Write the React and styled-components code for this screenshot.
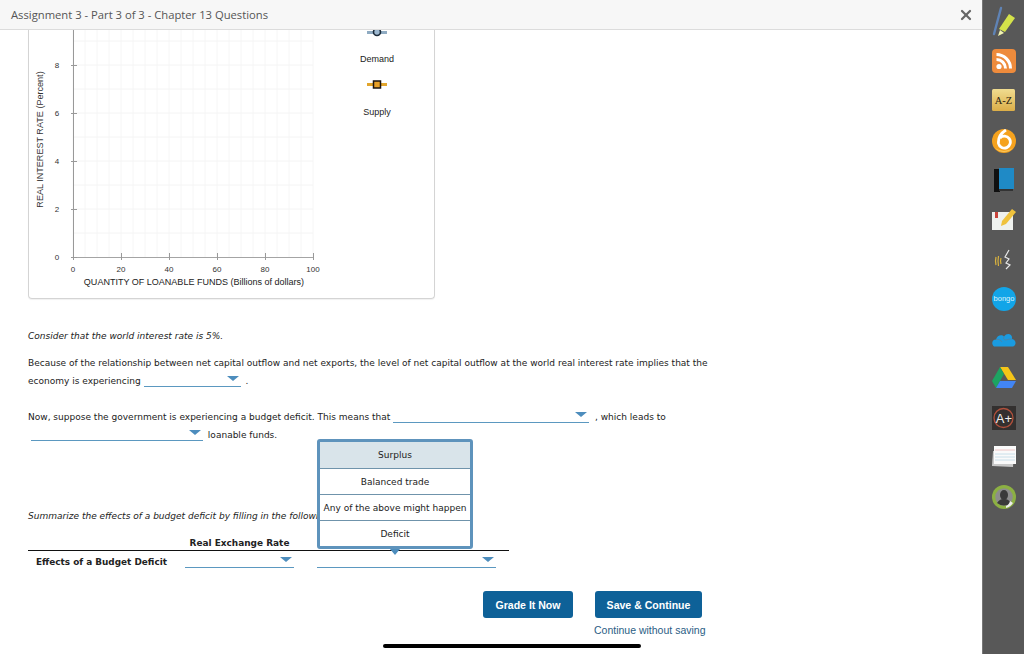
import React from "react";
import styled, { createGlobalStyle } from "styled-components";
import { X } from "lucide-react";

const GlobalStyle = createGlobalStyle`
	html, body {
		margin: 0;
		height: 100%;
		overflow: hidden;
		background: #fff;
	}
	#root {
		height: 100%;
	}
`

const Page = styled.div`
	display: flex;
	width: 1024px;
	height: 654px;
	position: relative;
	overflow: hidden;
`

const Main = styled.div`
	flex: 1;
	min-width: 0;
	display: flex;
	flex-direction: column;
`

const Header = styled.header`
	height: 30px;
	flex: none;
	box-sizing: border-box;
	display: flex;
	align-items: center;
	justify-content: space-between;
	padding: 0 8px 0 11px;
	background: #f7f7f7;
	border-bottom: 1px solid #dcdcdc;
`

const Title = styled.h1`
	margin: 0;
	font: 400 11.24px "Open Sans", sans-serif;
	color: #555;
`

const CloseButton = styled.button`
	display: flex;
	padding: 0;
	border: 0;
	background: none;
	color: #666;
`

const Content = styled.div`
	flex: 1;
	padding: 0 28px;
	font: 9.03px/18px "DejaVu Sans", Verdana, sans-serif;
	color: #222;
`

const ChartCard = styled.div`
	width: 407px;
	height: 269px;
	box-sizing: border-box;
	border: 1px solid #d4d4d4;
	border-top: 0;
	border-radius: 0 0 4px 4px;
	box-shadow: 0 1px 1px rgba(0, 0, 0, 0.06);

	svg {
		display: block;
	}
`

const Paragraph = styled.p`
	margin: ${props => props.$top}px 0 0;
	font-style: ${props => (props.$italic ? "italic" : "normal")};
	width: 690px;
`

const SelectBox = styled.span`
	display: inline-block;
	position: relative;
	vertical-align: -3px;
	box-sizing: border-box;
	width: ${props => props.$width}px;
	height: 15px;
	margin-left: ${props => props.$lead || 0}px;
	margin-right: ${props => props.$gap || 0}px;
	border-bottom: 1px solid #5b98c0;
`

const Caret = styled.span`
	position: absolute;
	right: 2px;
	top: 4px;
	border-style: solid;
	border-width: 5px 6px 0;
	border-color: #4d8dbd transparent transparent;
`

const Popup = styled.div`
	position: absolute;
	left: 0;
	bottom: 18px;
	z-index: 2;
	width: 156px;
	box-sizing: border-box;
	border: 3px solid #5e93bc;
	border-radius: 3px;
	background: #fff;

	&::after {
		content: "";
		position: absolute;
		left: 70px;
		bottom: -9px;
		border-style: solid;
		border-width: 6px 5px 0;
		border-color: #4d8dbd transparent transparent;
	}
`

const PopupOption = styled.div`
	height: 26px;
	display: flex;
	align-items: center;
	justify-content: center;
	white-space: nowrap;
	background: ${props => (props.$active ? "#d9e4ea" : "#fff")};
	border-top: ${props => (props.$first ? "0" : "1px solid #6f93ab")};
	box-sizing: border-box;
`

const Table = styled.div`
	display: grid;
	grid-template-columns: 134px 109px 179px;
	column-gap: 23px;
	width: 481px;
	margin-top: 9px;
`

const HeadCell = styled.div`
	height: 16px;
	line-height: 18px;
	font-size: 8.95px;
	font-weight: 700;
	text-align: center;
	border-bottom: 1px solid #111;
	margin-right: ${props => (props.$last ? "-13px" : "0")};
	margin-left: ${props => (props.$first ? "0" : "-23px")};
	padding-left: ${props => (props.$first ? "0" : "23px")};
`

const RowLabel = styled.div`
	padding: 2px 0 0 8px;
	font-size: 8.9px;
	font-weight: 700;
	white-space: nowrap;
`

const RowCell = styled.div`
	padding-top: 2px;
`

const Actions = styled.div`
	display: flex;
	align-items: flex-start;
	gap: 22px;
	margin: 20px 0 0 455px;
`

const ButtonColumn = styled.div`
	display: flex;
	flex-direction: column;
	align-items: flex-start;
`

const ActionButton = styled.button`
	width: ${props => props.$width}px;
	height: 27px;
	padding: 0;
	border: 0;
	border-radius: 3px;
	background: #0e6198;
	color: #fff;
	font: 700 10.55px "Liberation Sans", Arial, sans-serif;
`

const TextLink = styled.a`
	margin: 5px 0 0 -1px;
	font: 10.5px/14px "Liberation Sans", Arial, sans-serif;
	color: #2a5d84;
	white-space: nowrap;
`

const HomeBar = styled.div`
	position: absolute;
	left: 383px;
	bottom: 6px;
	width: 258px;
	height: 4px;
	border-radius: 2px;
	background: #000;
`

const Sidebar = styled.aside`
	width: 42px;
	flex: none;
	box-sizing: border-box;
	padding-top: 2px;
	display: flex;
	flex-direction: column;
	align-items: center;
	background: #585858;
	border-left: 1px solid #777;
`

const ToolSlot = styled.div`
	height: 39.6px;
	display: flex;
	align-items: center;
	justify-content: center;
	flex: none;
`

const axisFont = { fontFamily: '"Liberation Sans", Arial, sans-serif', fill: "#333" }

const Chart = () => {
	const xGrid = Array.from({ length: 21 }, (_, i) => 73 + i * 12)
	const yGrid = Array.from({ length: 9 }, (_, i) => 41 + i * 24)
	const xTicks = [[73, "0"], [121, "20"], [169, "40"], [217, "60"], [265, "80"], [313, "100"]]
	const yTicks = [[65, "8"], [113, "6"], [161, "4"], [209, "2"], [257, "0"]]
	return (
		<svg width="405" height="268" viewBox="29 30 405 268">
			{xGrid.map(x => <line key={x} x1={x} x2={x} y1="30" y2="257" stroke="#f6f6f6" />)}
			{yGrid.map(y => <line key={y} x1="73" x2="313" y1={y} y2={y} stroke="#f4f4f4" />)}
			<line x1="73.5" x2="73.5" y1="30" y2="257" stroke="#999" />
			<line x1="73" x2="313" y1="257.5" y2="257.5" stroke="#a4a4a4" />
			{xTicks.map(([x, label]) => (
				<g key={x}>
					<line x1={x + 0.5} x2={x + 0.5} y1="253" y2="260" stroke="#999" />
					<text x={x} y="272" textAnchor="middle" fontSize="8" style={axisFont}>{label}</text>
				</g>
			))}
			{yTicks.map(([y, label]) => (
				<g key={y}>
					<line x1="71" x2="77" y1={y + 0.5} y2={y + 0.5} stroke="#999" />
					<text x="57" y={y + 3} textAnchor="middle" fontSize="8" style={axisFont}>{label}</text>
				</g>
			))}
			<text x="194" y="285" textAnchor="middle" fontSize="9.03" style={{ ...axisFont, fill: "#222" }}>QUANTITY OF LOANABLE FUNDS (Billions of dollars)</text>
			<text transform="translate(43 139.5) rotate(-90)" textAnchor="middle" fontSize="9.07" style={axisFont}>REAL INTEREST RATE (Percent)</text>

			<rect x="367" y="31" width="20" height="3" fill="#8fabc2" />
			<circle cx="377" cy="32" r="3.5" fill="#9db8d0" stroke="#1c2b3a" strokeWidth="1.6" />
			<text x="377" y="62" textAnchor="middle" fontSize="9" style={{ ...axisFont, fill: "#222" }}>Demand</text>
			<rect x="367" y="83" width="20" height="3" fill="#e2a52c" />
			<rect x="373.5" y="81" width="7" height="7" fill="#e8a028" stroke="#1c1410" strokeWidth="1.5" />
			<text x="377" y="115" textAnchor="middle" fontSize="9" style={{ ...axisFont, fill: "#222" }}>Supply</text>
		</svg>
	)
}

const HighlighterIcon = () => (
	<svg width="24" height="32" viewBox="0 0 24 32">
		<path d="M9 2 L2 28" stroke="#5f83b5" strokeWidth="2.4" strokeLinecap="round" />
		<path d="M17 8 L23 12 L13 26 L7 23 Z" fill="#d4e24a" />
		<path d="M8 24 L12 27 L6 30 Z" fill="#f2f4b0" />
	</svg>
)

const RssIcon = () => (
	<svg width="24" height="24" viewBox="0 0 24 24">
		<rect width="24" height="24" rx="4" fill="#ee8b3c" />
		<circle cx="7" cy="17.5" r="2.6" fill="#fff" />
		<path d="M4.5 10.5 A9 9 0 0 1 13.5 19.5 M4.5 5.5 A14 14 0 0 1 18.5 19.5" fill="none" stroke="#fff" strokeWidth="3" />
	</svg>
)

const AzIcon = () => (
	<svg width="23" height="23" viewBox="0 0 23 23">
		<defs>
			<linearGradient id="azGold" x1="0" x2="0" y1="0" y2="1">
				<stop offset="0" stopColor="#f0dc90" />
				<stop offset="1" stopColor="#dcae48" />
			</linearGradient>
		</defs>
		<rect width="23" height="22" rx="1.5" fill="url(#azGold)" />
		<text x="11.5" y="15" textAnchor="middle" fontSize="10.5" fontFamily='"Liberation Serif", serif' fill="#2b2110">A-Z</text>
	</svg>
)

const SixIcon = () => (
	<svg width="24" height="24" viewBox="0 0 24 24">
		<circle cx="12" cy="12" r="12" fill="#f5a21e" />
		<path d="M3 19 A12 12 0 0 0 21 19 Q12 25 3 19 Z" fill="#fbc65a" />
		<path d="M14 1 C9 4 6 9 6.5 14.5 A6 6 0 1 0 8 9" fill="none" stroke="#fff" strokeWidth="2.8" />
	</svg>
)

const BookIcon = () => (
	<svg width="20" height="24" viewBox="0 0 20 24">
		<rect x="0" y="1" width="6" height="23" fill="#101010" />
		<path d="M5 0 H20 V21 H5 Z" fill="#1f8ac6" />
		<rect x="5" y="21" width="14" height="2" fill="#333" />
	</svg>
)

const NoteIcon = () => (
	<svg width="24" height="22" viewBox="0 0 24 22">
		<rect y="3" width="21" height="18" fill="#eef1ee" />
		<rect x="3" y="3" width="3" height="6" fill="#c8453c" />
		<path d="M20 0 L24 3 L14 15 L9 17 L10 12 Z" fill="#efc23c" />
	</svg>
)

const EarIcon = () => (
	<svg width="20" height="22" viewBox="0 0 20 22">
		<path d="M2 9 Q1 13 2 17 M4.5 8 Q3.5 13 4.5 18 M7 10 Q6 13 7 16" fill="none" stroke="#d9b23e" strokeWidth="1.2" />
		<path d="M15 2 L11 9 L15 11 L12 15 L16 17 L12 21" fill="none" stroke="#e8e8e8" strokeWidth="1.2" />
	</svg>
)

const BongoIcon = () => (
	<svg width="24" height="24" viewBox="0 0 24 24">
		<circle cx="12" cy="12" r="12" fill="#12a5e8" />
		<text x="12" y="14" textAnchor="middle" fontSize="7.5" fontFamily='"Liberation Sans", sans-serif' fill="#dff4fd">bongo</text>
	</svg>
)

const CloudIcon = () => (
	<svg width="24" height="16" viewBox="0 0 24 16">
		<path d="M2 15.5 C-1 13 0 8.5 4 8.5 C5 4 10 3 12 5.5 C15 1 21 3 20 8 C24 8.5 25 14 21 15.5 Z" fill="#1a9be0" />
		<path d="M4 8.5 C7 8 9 9 10 11 M12 5.5 C11 8 12 9 14 9 C17 8 19 8 20 8" fill="none" stroke="#5a7f98" strokeWidth="0.7" />
	</svg>
)

const DriveIcon = () => (
	<svg width="24" height="22" viewBox="0 0 24 22">
		<path d="M8 0 H16 L24 13 H16 Z" fill="#f5c518" />
		<path d="M8 0 L12 7 L4 21 L0 14 Z" fill="#1da462" />
		<path d="M8 14 H24 L20 21 H4 Z" fill="#4285f4" />
	</svg>
)

const GradeIcon = () => (
	<svg width="24" height="24" viewBox="0 0 24 24">
		<rect width="24" height="24" fill="#33302f" />
		<ellipse cx="11.5" cy="12" rx="9.5" ry="9.5" fill="none" stroke="#b0503c" strokeWidth="1.3" />
		<text x="12" y="17" textAnchor="middle" fontSize="13" fontFamily='"Liberation Sans", sans-serif' fill="#eee">A+</text>
	</svg>
)

const CardsIcon = () => (
	<svg width="24" height="22" viewBox="0 0 24 22">
		<path d="M1 5 L22 5 L21 21 L0 20 Z" fill="#c9c9c9" />
		<rect x="2" y="0" width="22" height="18" fill="#fafafa" />
		<path d="M3 4 H23" stroke="#eab6b6" strokeWidth="0.8" />
		<path d="M3 8 H23 M3 11 H23 M3 14 H23" stroke="#bcd8e4" strokeWidth="0.8" />
	</svg>
)

const AvatarIcon = () => (
	<svg width="24" height="24" viewBox="0 0 24 24">
		<circle cx="12" cy="12" r="12" fill="#8cb043" />
		<circle cx="12" cy="12" r="8.8" fill="#8d8d8d" />
		<ellipse cx="12" cy="10" rx="4" ry="5" fill="#3a3a3a" />
		<path d="M5 18 Q8 13.5 12 14 Q16 13.5 19 18 Q12 23 5 18 Z" fill="#3a3a3a" />
		<path d="M14 23 A11 11 0 0 0 21 18 L18 16 Q17 20 14 21 Z" fill="#eee" />
	</svg>
)

const tools = [
	HighlighterIcon, RssIcon, AzIcon, SixIcon, BookIcon, NoteIcon, EarIcon,
	BongoIcon, CloudIcon, DriveIcon, GradeIcon, CardsIcon, AvatarIcon,
]

const options = ["Surplus", "Balanced trade", "Any of the above might happen", "Deficit"]

const Select = ({ width, gap, lead, children }) => (
	<SelectBox $width={width} $gap={gap} $lead={lead}>
		<Caret />
		{children}
	</SelectBox>
)

const App = () => (
	<Page>
		<GlobalStyle />
		<Main>
			<Header>
				<Title>Assignment 3 - Part 3 of 3 - Chapter 13 Questions</Title>
				<CloseButton><X size={16} strokeWidth={3.4} /></CloseButton>
			</Header>
			<Content>
				<ChartCard><Chart /></ChartCard>
				<Paragraph $top={28} $italic>Consider that the world interest rate is 5%.</Paragraph>
				<Paragraph $top={9}>
					Because of the relationship between net capital outflow and net exports, the level of net capital outflow at the world real interest rate implies that the economy is experiencing <Select width={97} gap={2} /> .
				</Paragraph>
				<Paragraph $top={18}>
					Now, suppose the government is experiencing a budget deficit. This means that <Select width={196} gap={3} /> , which leads to <Select width={172} lead={3} gap={2} /> loanable funds.
				</Paragraph>
				<Paragraph $top={63} $italic>Summarize the effects of a budget deficit by filling in the following table.</Paragraph>
				<Table>
					<HeadCell $first />
					<HeadCell>Real Exchange Rate</HeadCell>
					<HeadCell $last />
					<RowLabel>Effects of a Budget Deficit</RowLabel>
					<RowCell><Select width={109} /></RowCell>
					<RowCell>
						<Select width={179}>
							<Popup>
								{options.map((option, i) => (
									<PopupOption key={option} $active={i === 0} $first={i === 0}>{option}</PopupOption>
								))}
							</Popup>
						</Select>
					</RowCell>
				</Table>
				<Actions>
					<ActionButton $width={90}>Grade It Now</ActionButton>
					<ButtonColumn>
						<ActionButton $width={107}>Save &amp; Continue</ActionButton>
						<TextLink>Continue without saving</TextLink>
					</ButtonColumn>
				</Actions>
			</Content>
		</Main>
		<Sidebar>
			{tools.map((Tool, i) => <ToolSlot key={i}><Tool /></ToolSlot>)}
		</Sidebar>
		<HomeBar />
	</Page>
)

export default App
